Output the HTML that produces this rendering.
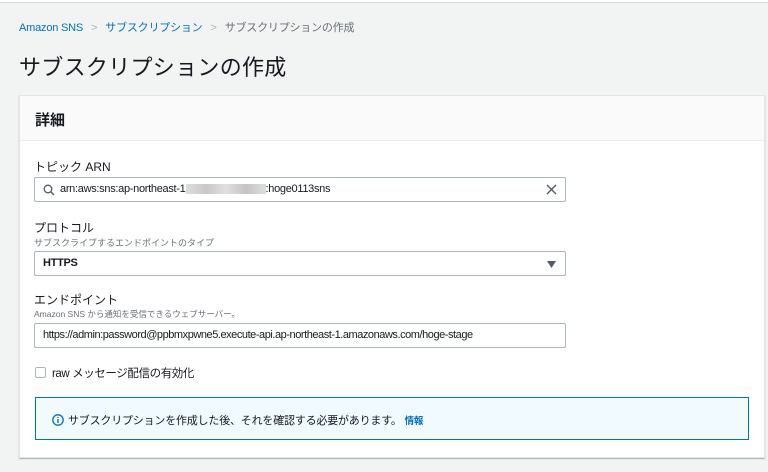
<!DOCTYPE html>
<html><head><meta charset="utf-8"><style>
*{box-sizing:border-box;margin:0;padding:0}
body{width:768px;height:472px;overflow:hidden;background:#f2f3f3;font-family:"Liberation Sans","Noto Sans CJK JP",sans-serif;color:#16191f;position:relative}
.top{position:absolute;left:0;top:0;width:768px;height:3px;border-bottom:1px solid #d5dbdb;background:#fff}
.a{position:absolute}
.bc{left:19px;top:19px;font-size:11px;color:#687078;white-space:nowrap;letter-spacing:-0.2px}
.bc span.l{color:#0073bb}
.bc .s{margin:0 8px;color:#aab7b8}
h1{position:absolute;left:19px;top:50px;font-size:22px;font-weight:400;letter-spacing:0.3px}
.card{left:19px;top:95px;width:746px;height:363px;background:#fff;border:1px solid #e2e5e5;box-shadow:0 1px 1px rgba(0,28,36,.3)}
.hd{position:absolute;left:0;top:0;width:100%;height:45px;background:#fafafa;border-bottom:1px solid #eaeded;font-size:15px;font-weight:700;padding:13px 0 0 15px}
.lab{font-size:12px;left:34px}
.sub{font-size:9px;color:#687078;left:34px}
.inp{left:34px;width:532px;height:25px;border:1px solid #aab7b8;border-radius:2px;background:#fff;font-size:11px;padding:5px 8px;white-space:nowrap;letter-spacing:-0.3px}
.info{left:35px;top:397px;width:714px;height:43px;border:1px solid #0073bb;background:#f1faff;font-size:11px;padding:14px 0 0 16px;letter-spacing:-0.2px}
</style></head><body>
<div class="top"></div>
<div class="a bc"><span class="l">Amazon SNS</span><span class="s">&gt;</span><span class="l">サブスクリプション</span><span class="s">&gt;</span>サブスクリプションの作成</div>
<h1>サブスクリプションの作成</h1>
<div class="a card"><div class="hd">詳細</div></div>
<div class="a lab" style="top:158px">トピック ARN</div>
<div class="a inp" style="top:177px;padding-left:25px">
<svg class="a" style="left:8px;top:6px" width="12" height="12" viewBox="0 0 12 12"><circle cx="5" cy="5" r="3.8" fill="none" stroke="#545b64" stroke-width="1.3"/><path d="M7.8 7.8L11 11" stroke="#545b64" stroke-width="1.4"/></svg>
arn:aws:sns:ap-northeast-1<span style="display:inline-block;width:80px;height:10px;background:linear-gradient(90deg,#ddd,#c8c8c8,#e0e0e0,#c4c4c4,#ddd);vertical-align:middle"></span>:hoge0113sns
<svg class="a" style="right:8px;top:6px" width="11" height="11" viewBox="0 0 11 11"><path d="M1 1L10 10M10 1L1 10" stroke="#545b64" stroke-width="1.4"/></svg>
</div>
<div class="a lab" style="top:219px">プロトコル</div>
<div class="a sub" style="top:236px">サブスクライブするエンドポイントのタイプ</div>
<div class="a inp" style="top:251px;font-weight:700">HTTPS<svg class="a" style="right:9px;top:9px" width="9" height="7" viewBox="0 0 9 7"><path d="M0 0H9L4.5 7Z" fill="#545b64"/></svg></div>
<div class="a lab" style="top:291px">エンドポイント</div>
<div class="a sub" style="top:308px;font-size:8.5px">Amazon SNS から通知を受信できるウェブサーバー。</div>
<div class="a inp" style="top:323px;letter-spacing:-0.45px">https://admin:password@ppbmxpwne5.execute-api.ap-northeast-1.amazonaws.com/hoge-stage</div>
<div class="a" style="left:35px;top:367px;width:11px;height:11px;border:1px solid #aab7b8;border-radius:2px;background:#fff"></div>
<div class="a" style="left:52px;top:365px;font-size:11.5px;letter-spacing:-0.4px">raw メッセージ配信の有効化</div>
<div class="a info"><svg style="vertical-align:-2px;margin-right:4px" width="12" height="12" viewBox="0 0 12 12"><circle cx="6" cy="6" r="5.2" fill="none" stroke="#0073bb" stroke-width="1.3"/><path d="M6 5V9M6 3V4" stroke="#0073bb" stroke-width="1.4"/></svg>サブスクリプションを作成した後、それを確認する必要があります。 <span style="color:#0073bb;font-size:9.5px;font-weight:700">情報</span></div>
</body></html>
